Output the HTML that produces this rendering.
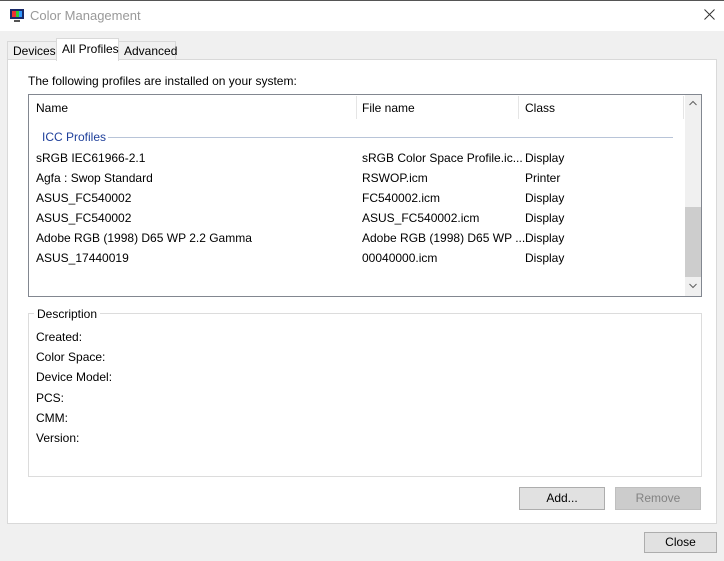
<!DOCTYPE html>
<html><head><style>
*{margin:0;padding:0;box-sizing:border-box}
body{width:724px;height:561px;background:#f0f0f0;font-family:"Liberation Sans",sans-serif;font-size:12px;color:#000;position:relative;overflow:hidden}
.abs{position:absolute}
.t{position:absolute;white-space:nowrap}
.btn{position:absolute;background:#e1e1e1;border:1px solid #adadad;text-align:center;line-height:21px}
</style></head><body>
<div class="abs" style="left:0;top:0;width:724px;height:31px;background:#fff;border-top:1px solid #555"></div>
<svg class="abs" style="left:9px;top:8px" width="16" height="16"><rect x="1" y="1" width="14" height="10" fill="#1a2a6a"/><rect x="3" y="3" width="4" height="6" fill="#e33"/><rect x="7" y="3" width="3" height="6" fill="#3c3"/><rect x="10" y="3" width="3" height="6" fill="#39f"/><rect x="5" y="12" width="6" height="2" fill="#555"/></svg>
<div class="t" style="left:30px;top:8px;font-size:13px;color:#999">Color Management</div>
<svg class="abs" style="left:704px;top:9px" width="11" height="11"><path d="M0.5 0.5L10.5 10.5M10.5 0.5L0.5 10.5" stroke="#333" stroke-width="1"/></svg>
<div class="abs" style="left:7px;top:41px;width:50px;height:19px;background:#f0f0f0;border:1px solid #d9d9d9;border-bottom:none"></div>
<div class="t" style="left:13px;top:44px">Devices</div>
<div class="abs" style="left:118px;top:41px;width:58px;height:19px;border:1px solid #d9d9d9;border-bottom:none"></div>
<div class="t" style="left:124px;top:44px">Advanced</div>
<div class="abs" style="left:7px;top:59px;width:710px;height:465px;background:#fff;border:1px solid #d9d9d9"></div>
<div class="abs" style="left:56px;top:38px;width:63px;height:23px;background:#fff;border:1px solid #d9d9d9;border-bottom:none"></div>
<div class="t" style="left:62px;top:42px">All Profiles</div>
<div class="t" style="left:28px;top:74px">The following profiles are installed on your system:</div>
<div class="abs" style="left:28px;top:94px;width:674px;height:203px;border:1px solid #828790;background:#fff"></div>
<div class="abs" style="left:356px;top:96px;width:1px;height:23px;background:#e5e5e5"></div>
<div class="abs" style="left:518px;top:96px;width:1px;height:23px;background:#e5e5e5"></div>
<div class="abs" style="left:683px;top:96px;width:1px;height:23px;background:#e5e5e5"></div>
<div class="t" style="left:36px;top:101px">Name</div>
<div class="t" style="left:362px;top:101px">File name</div>
<div class="t" style="left:525px;top:101px">Class</div>
<div class="abs" style="left:685px;top:95px;width:16px;height:201px;background:#f0f0f0"></div>
<div class="abs" style="left:685px;top:207px;width:16px;height:70px;background:#cdcdcd"></div>
<svg class="abs" style="left:689px;top:100px" width="8" height="6"><path d="M0.5 5L4 1.5L7.5 5" stroke="#606060" fill="none"/></svg>
<svg class="abs" style="left:689px;top:283px" width="8" height="6"><path d="M0.5 1L4 4.5L7.5 1" stroke="#606060" fill="none"/></svg>
<div class="t" style="left:42px;top:130px;color:#1e3f9a">ICC Profiles</div>
<div class="abs" style="left:108px;top:137px;width:565px;height:1px;background:#b8c4d8"></div>
<div class="t" style="left:36px;top:148px;line-height:20px">sRGB IEC61966-2.1<br>Agfa : Swop Standard<br>ASUS_FC540002<br>ASUS_FC540002<br>Adobe RGB (1998) D65 WP 2.2 Gamma<br>ASUS_17440019</div>
<div class="t" style="left:362px;top:148px;line-height:20px">sRGB Color Space Profile.ic...<br>RSWOP.icm<br>FC540002.icm<br>ASUS_FC540002.icm<br>Adobe RGB (1998) D65 WP ...<br>00040000.icm</div>
<div class="t" style="left:525px;top:148px;line-height:20px">Display<br>Printer<br>Display<br>Display<br>Display<br>Display</div>
<div class="abs" style="left:28px;top:313px;width:674px;height:164px;border:1px solid #dcdcdc"></div>
<div class="t" style="left:34px;top:307px;background:#fff;padding:0 3px">Description</div>
<div class="t" style="left:36px;top:327px;line-height:20.2px">Created:<br>Color Space:<br>Device Model:<br>PCS:<br>CMM:<br>Version:</div>
<div class="btn" style="left:519px;top:487px;width:86px;height:23px">Add...</div>
<div class="btn" style="left:615px;top:487px;width:86px;height:23px;background:#ccc;border-color:#bfbfbf;color:#838383">Remove</div>
<div class="btn" style="left:644px;top:532px;width:73px;height:21px;line-height:19px">Close</div>
</body></html>
